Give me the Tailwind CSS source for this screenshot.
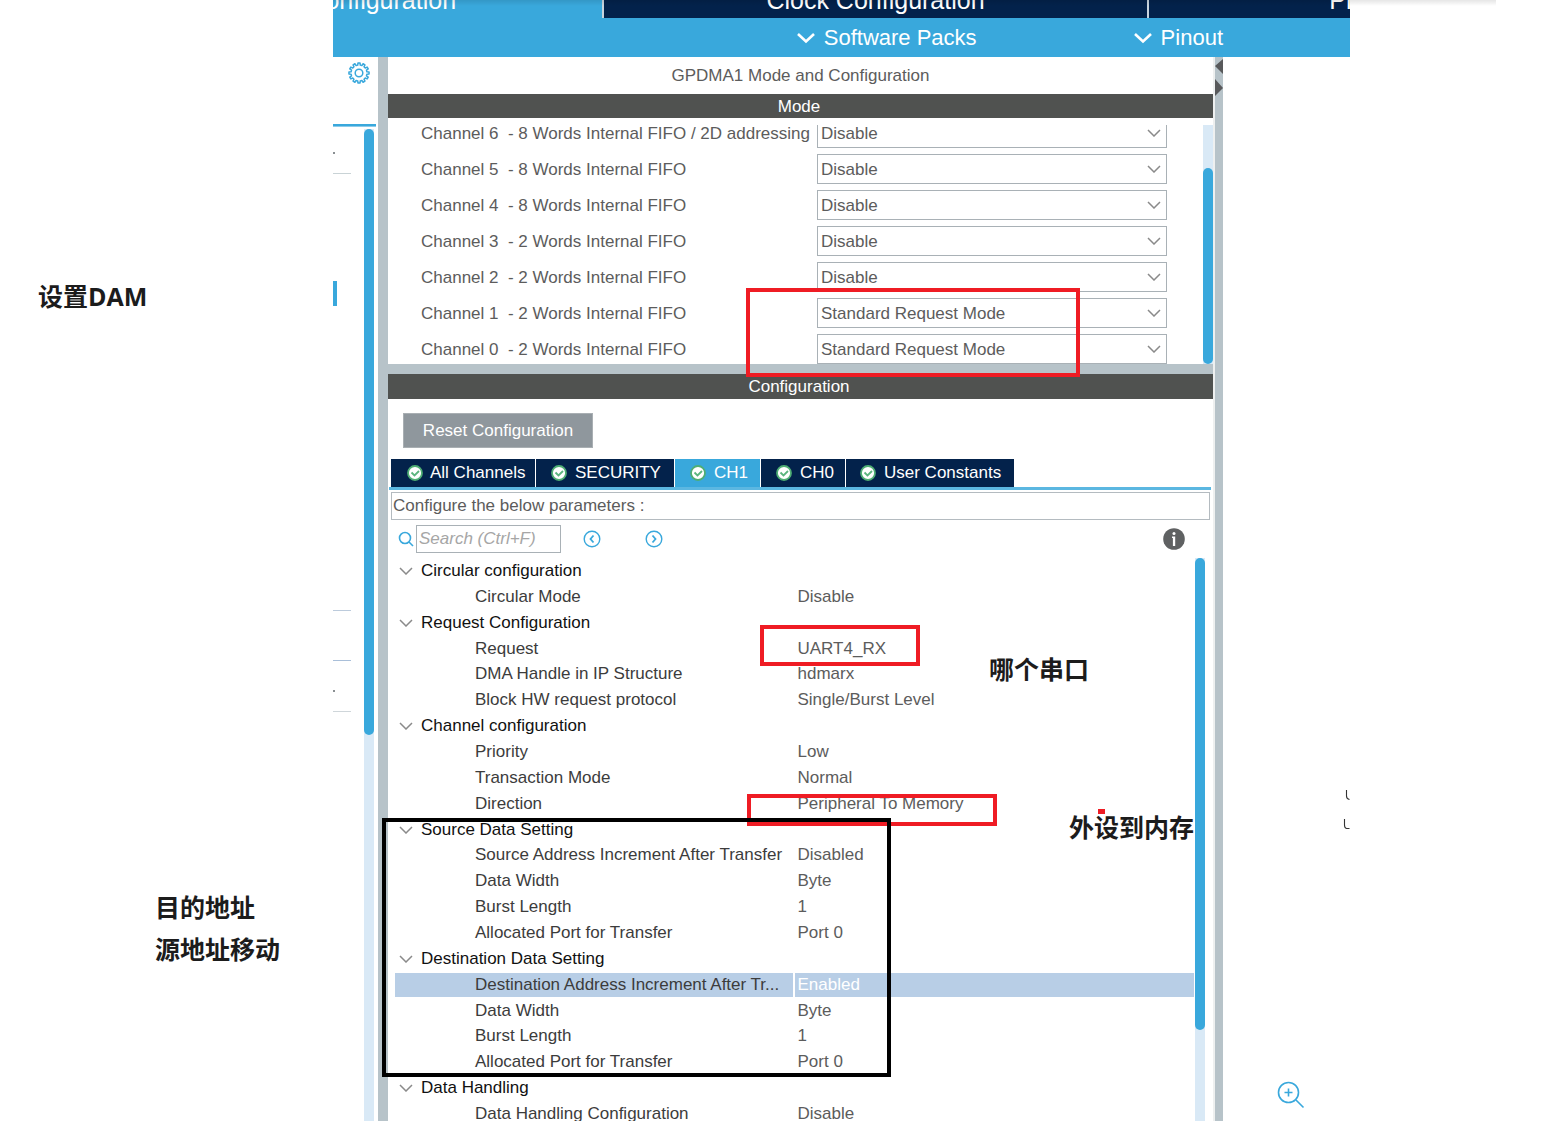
<!DOCTYPE html>
<html lang="zh">
<head>
<meta charset="utf-8">
<title>GPDMA1 Mode and Configuration</title>
<script src="https://cdn.jsdelivr.net/npm/@tailwindcss/browser@4"></script>
</head>
<body class="bg-white">
<svg class="hidden">
  <symbol id="chev" viewBox="0 0 14 8"><path d="M1 1l6 6 6-6" fill="none" stroke="currentColor" stroke-width="1.5"/></symbol>
  <symbol id="ok" viewBox="0 0 16 16"><circle cx="8" cy="8" r="7" fill="#fff" stroke="#4fae74" stroke-width="1.8"/><path d="M4.5 7.5l3 3 4.5-4.5" fill="none" stroke="#5bb57e" stroke-width="1.8"/></symbol>
</svg>
<div class="relative flex h-screen overflow-hidden font-['Liberation_Sans',Arial,sans-serif] text-[17px] leading-[24px] text-[#5c5c5c]">

  <!-- notes column -->
  <aside class="relative w-[333px] shrink-0 font-['Open_Sans','Noto_Sans_CJK_SC',sans-serif] text-[25px] leading-[42px] font-bold text-[#1c1c1c]">
    <p class="absolute top-[275px] left-[38px]">设置DAM</p>
    <p class="absolute top-[886px] left-[155px]">目的地址<br>源地址移动</p>
  </aside>

  <!-- application window -->
  <main class="flex min-w-0 flex-1 flex-col">
    <header class="shrink-0 overflow-hidden bg-[#39a8dc] text-white">
      <nav class="-ml-[273px] flex h-[18px] items-end text-[25px]">
        <button class="h-[36px] w-[544px] shrink-0 border-r-2 border-[#c8d4de] bg-[#39a8dc] leading-[34px]">Pinout &amp; Configuration</button>
        <button class="h-[36px] w-[545px] shrink-0 border-r-2 border-[#c8d4de] bg-[#03224b] leading-[34px]">Clock Configuration</button>
        <button class="h-[36px] w-[544px] shrink-0 bg-[#03224b] leading-[34px]">Project Manager</button>
      </nav>
      <div class="flex h-[39px] items-center justify-end gap-[157px] pr-[127px] text-[22px]">
        <button class="flex items-center gap-[9px]"><svg class="h-[12px] w-[18px]" viewBox="0 0 18 12" fill="none" stroke="#fff" stroke-width="2.600"><path d="M1 2l8 7.500 8-7.500"/></svg>Software Packs</button>
        <button class="flex items-center gap-[9px]"><svg class="h-[12px] w-[18px]" viewBox="0 0 18 12" fill="none" stroke="#fff" stroke-width="2.600"><path d="M1 2l8 7.500 8-7.500"/></svg>Pinout</button>
      </div>
    </header>

    <div class="flex min-h-0 flex-1">
      <!-- category list, mostly scrolled out of view -->
      <section class="flex w-[45px] shrink-0 flex-col">
        <div class="flex h-[67px] shrink-0 justify-end pt-[5px] pr-2">
          <svg class="size-[22px]" viewBox="0 0 22 22" fill="none" stroke="#39a8dc" stroke-width="1.500" stroke-linejoin="round"><circle cx="11" cy="11" r="3.800"/><path id="gear"/></svg>
        </div>
        <div class="mr-0.5 h-[3px] shrink-0 border-b border-[#8ccbe9] bg-[#39a8dc]"></div>
        <div class="flex min-h-0 flex-1 justify-between">
          <div class="w-[18px]">
            <div class="mt-[25px] size-[2px] bg-[#8a8f92]"></div>
            <div class="mt-[19px] h-px bg-[#c9d3d6]"></div>
            <div class="mt-[107px] h-[25px] w-[4px] bg-[#39a8dc]"></div>
            <div class="mt-[304px] h-px bg-[#bccbdc]"></div>
            <div class="mt-[49px] h-px bg-[#a9bfd9]"></div>
            <div class="mt-[29px] size-[2px] bg-[#8a8f92]"></div>
            <div class="mt-[19px] h-px bg-[#cfd6da]"></div>
          </div>
          <div class="mt-[2px] mr-1 w-[10px] bg-[#d9e9f6]"><div class="h-[606px] rounded-full bg-[#39a8dc]"></div></div>
        </div>
      </section>
      <div class="w-[10px] shrink-0 bg-[#b7c3c9]"></div>

      <!-- peripheral panel -->
      <section class="relative flex min-w-0 flex-1 flex-col">
        <h1 class="h-[37px] shrink-0 text-center leading-[38px]">GPDMA1 Mode and Configuration</h1>
        <h2 class="h-[24px] shrink-0 bg-[#505250] pr-[3px] text-center leading-[26px] text-white">Mode</h2>
        <div class="mt-[7px] flex h-[239px] shrink-0">
          <div class="flex min-w-0 flex-1 flex-col justify-end gap-1.5 overflow-hidden pl-[33px] whitespace-pre" id="channels"></div>
          <div class="ml-9 flex w-[10px] flex-col bg-[#d9e9f6] pt-[43px]"><div class="flex-1 rounded-full bg-[#39a8dc]"></div></div>
        </div>
        <div class="h-[10px] shrink-0 bg-[#b7c3c9]"></div>
        <h2 class="h-[25px] shrink-0 bg-[#505250] pr-[3px] text-center leading-[26px] text-white">Configuration</h2>
        <div class="shrink-0 pt-[14px] pl-[15px]">
          <button class="h-[35px] w-[190px] border border-[#a9afb3] bg-[#8f979d] text-white">Reset Configuration</button>
        </div>
        <nav class="mt-[11px] ml-px mr-0.5 flex shrink-0 gap-px border-b-[3px] border-[#5bb7e1] pl-0.5 leading-[28px] whitespace-nowrap text-white">
          <button class="flex h-[28px] w-[144px] items-center gap-[7px] bg-[#03224b] pl-[16px]"><svg class="size-4 shrink-0"><use href="#ok"/></svg>All Channels</button>
          <button class="flex h-[28px] w-[138px] items-center gap-2 bg-[#03224b] pl-[15px]"><svg class="size-4 shrink-0"><use href="#ok"/></svg>SECURITY</button>
          <button class="flex h-[28px] w-[85px] items-center gap-2 bg-[#39a8dc] pl-[15px]"><svg class="size-4 shrink-0"><use href="#ok"/></svg>CH1</button>
          <button class="flex h-[28px] w-[84px] items-center gap-2 bg-[#03224b] pl-[15px]"><svg class="size-4 shrink-0"><use href="#ok"/></svg>CH0</button>
          <button class="flex h-[28px] w-[168px] items-center gap-2 bg-[#03224b] pl-[14px]"><svg class="size-4 shrink-0"><use href="#ok"/></svg>User Constants</button>
        </nav>
        <p class="mx-[3px] mt-[2px] h-[28px] shrink-0 border border-[#b4bbc0] pl-px leading-[26px]">Configure the below parameters :</p>
        <div class="flex h-[38px] shrink-0 items-center pr-[28px] pl-[10px]">
          <svg class="size-[16px]" viewBox="0 0 16 16" fill="none" stroke="#39a8dc" stroke-width="1.600"><circle cx="7" cy="7" r="5.500"/><path d="M11 11l4 4"/></svg>
          <input aria-label="Search" placeholder="Search (Ctrl+F)" class="ml-0.5 h-[28px] w-[145px] border border-[#a9b1b6] px-0.5 italic placeholder:text-[#a6a6a6]">
          <button aria-label="Previous" class="ml-[22px]"><svg class="size-[18px]" viewBox="0 0 18 18" fill="none" stroke="#39a8dc" stroke-width="1.400"><circle cx="9" cy="9" r="7.800"/><path stroke-width="1.800" d="M10.500 5.500L7.500 9l3 3.500"/></svg></button>
          <button aria-label="Next" class="ml-[44px]"><svg class="size-[18px]" viewBox="0 0 18 18" fill="none" stroke="#39a8dc" stroke-width="1.400"><circle cx="9" cy="9" r="7.800"/><path stroke-width="1.800" d="M7.500 5.500l3 3.500-3 3.500"/></svg></button>
          <button aria-label="Info" class="ml-auto"><svg class="size-[22px]" viewBox="0 0 22 22"><circle cx="11" cy="11" r="10.800" fill="#5f6162"/><circle cx="11" cy="5.500" r="1.500" fill="#fff"/><path d="M9 8.500h3.200v9.500H9.900v-8H9z" fill="#fff"/></svg></button>
        </div>
        <div class="flex min-h-0 flex-1 overflow-hidden pr-2">
          <div class="min-w-0 flex-1 pl-[7px]">
            <table class="h-[569px] w-full table-fixed"><tbody id="params"></tbody></table>
          </div>
          <div class="relative z-10 ml-px w-[10px] bg-[#d9e9f6]"><div class="h-[472px] rounded-full bg-[#39a8dc]"></div></div>
        </div>

        <!-- mark-up drawn over the panel -->
        <div class="pointer-events-none absolute top-[231px] left-[358px] h-[89px] w-[334px] border-4 border-[#ef1c24]"></div>
        <div class="pointer-events-none absolute top-[568px] left-[372px] h-[41px] w-[160px] border-4 border-[#ef1c24]"></div>
        <div class="pointer-events-none absolute top-[737px] left-[359px] h-[32px] w-[250px] border-4 border-[#ef1c24]"></div>
        <div class="pointer-events-none absolute top-[761px] -left-[6px] h-[259px] w-[509px] border-4 border-black"></div>
        <p class="absolute top-[590px] left-[601px] font-['Noto_Sans_CJK_SC',sans-serif] text-[25px] leading-[42px] font-bold whitespace-nowrap text-[#1c1c1c]">哪个串口</p>
        <p class="absolute top-[748px] left-[681px] font-['Noto_Sans_CJK_SC',sans-serif] text-[25px] leading-[42px] font-bold whitespace-nowrap text-[#1c1c1c]">外设到内存</p>
        <div class="absolute top-[752px] left-[710px] h-[5px] w-[7px] bg-[#ef1c24]"></div>
      </section>

      <div class="w-0.5 shrink-0 bg-[#eef0f0]"></div>
      <div class="w-2 shrink-0 bg-[#b7c3c9] pt-[2px]">
        <svg class="h-[38px] w-2" viewBox="0 0 8 38" fill="#58595b"><path d="M8 0v15L0 7zM0 20v17l8-8z"/></svg>
      </div>

      <!-- pinout view -->
      <section class="relative w-[127px] shrink-0 overflow-hidden">
        <svg class="absolute top-[733px] right-0 h-[42px] w-[7px]" viewBox="0 0 7 42" fill="none" stroke="#333" stroke-width="1.100"><path d="M3.500 0v6q0 3 3 3.500M1.500 29v6q0 3 2 3.500h3"/></svg>
        <button aria-label="Zoom in" class="absolute top-[1024px] left-[54px]"><svg class="size-[28px]" viewBox="0 0 28 28" fill="none" stroke="#39a8dc" stroke-width="1.600"><circle cx="11.500" cy="11.500" r="10"/><path d="M19 19l7.500 7.500M7.500 11.500h8M11.500 7.500v8"/></svg></button>
      </section>
    </div>
  </main>

  <div class="w-[196px] shrink-0"></div>
  <div class="pointer-events-none absolute top-0 right-[50px] left-[333px] h-[6px] bg-linear-to-b from-black/10 to-transparent"></div>
</div>

<script>
  // settings gear: twelve rounded teeth between two radii
  const teeth = 12, points = [];
  for (let i = 0; i < teeth; i++) {
    [[-0.3, 8], [-0.2, 10.1], [0.2, 10.1], [0.3, 8]].forEach(([t, r]) => {
      const a = (i + t) * 2 * Math.PI / teeth;
      points.push((11 + r * Math.sin(a)).toFixed(2) + ' ' + (11 - r * Math.cos(a)).toFixed(2));
    });
  }
  document.getElementById('gear').setAttribute('d', 'M' + points.join('L') + 'Z');

  const channels = [
    ['Channel 6  - 8 Words Internal FIFO / 2D addressing', 'Disable'],
    ['Channel 5  - 8 Words Internal FIFO', 'Disable'],
    ['Channel 4  - 8 Words Internal FIFO', 'Disable'],
    ['Channel 3  - 2 Words Internal FIFO', 'Disable'],
    ['Channel 2  - 2 Words Internal FIFO', 'Disable'],
    ['Channel 1  - 2 Words Internal FIFO', 'Standard Request Mode'],
    ['Channel 0  - 2 Words Internal FIFO', 'Standard Request Mode'],
  ];
  document.getElementById('channels').innerHTML = channels.map(([name, value], i) =>
    `<div class="flex h-[30px] shrink-0 items-center"><label for="ch${i}" class="w-[396px] shrink-0 pt-0.5">${name}</label><div class="relative flex-1"><select id="ch${i}" class="block h-[30px] w-full appearance-none border border-[#a9b1b6] bg-white pt-0.5 pl-[3px]"><option>${value}</option></select><svg class="pointer-events-none absolute top-[11px] right-[6px] h-[8px] w-[14px] text-[#8a8a8a]"><use href="#chev"/></svg></div></div>`).join('');

  const params = [
    ['Circular configuration'],
    ['Circular Mode', 'Disable'],
    ['Request Configuration'],
    ['Request', 'UART4_RX'],
    ['DMA Handle in IP Structure', 'hdmarx'],
    ['Block HW request protocol', 'Single/Burst Level'],
    ['Channel configuration'],
    ['Priority', 'Low'],
    ['Transaction Mode', 'Normal'],
    ['Direction', 'Peripheral To Memory'],
    ['Source Data Setting'],
    ['Source Address Increment After Transfer', 'Disabled'],
    ['Data Width', 'Byte'],
    ['Burst Length', '1'],
    ['Allocated Port for Transfer', 'Port 0'],
    ['Destination Data Setting'],
    ['Destination Address Increment After Tr...', 'Enabled', true],
    ['Data Width', 'Byte'],
    ['Burst Length', '1'],
    ['Allocated Port for Transfer', 'Port 0'],
    ['Data Handling'],
    ['Data Handling Configuration', 'Disable'],
  ];
  document.getElementById('params').innerHTML = params.map(([name, value, selected]) => {
    if (!value) return `<tr><th colspan="2" class="p-0 text-left font-normal text-[#111]"><div class="flex items-center gap-2 pl-[4px]"><svg class="h-[8px] w-[14px] text-[#8a8a8a]"><use href="#chev"/></svg>${name}</div></th></tr>`;
    const bg = selected ? 'bg-[#b8cee6]' : '';
    const color = selected ? 'text-white' : '';
    return `<tr><td class="w-[401px] p-0 pr-0.5"><div class="${bg} h-[24px] pl-[80px] whitespace-nowrap text-[#3c3c3c]">${name}</div></td><td class="p-0"><div class="${bg} ${color} h-[24px] pl-[3px]">${value}</div></td></tr>`;
  }).join('');
</script>
</body>
</html>
